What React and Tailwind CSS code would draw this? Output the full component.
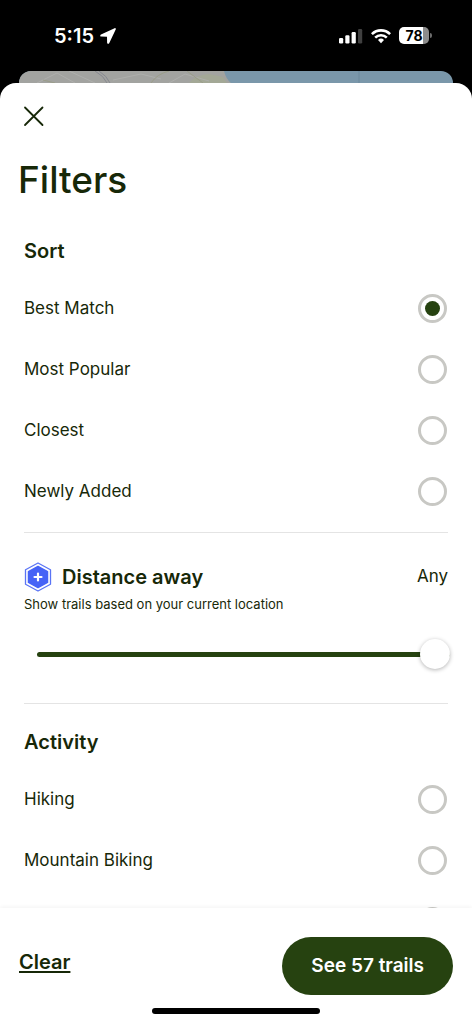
import React, { useState } from 'react';

const sortOptions = ['Best Match', 'Most Popular', 'Closest', 'Newly Added'];
const activities = ['Hiking', 'Mountain Biking', 'Running'];

const StatusBar = () => (
  <div className="flex h-[71px] shrink-0 items-center justify-between pl-[54px] pr-10 text-white">
    <div className="flex items-center gap-1.5">
      <span className="text-xl font-semibold">5:15</span>
      <svg className="size-4" viewBox="0 0 16 16" fill="currentColor" aria-hidden="true">
        <path d="M14.600.2 1 6.600C-.2 7.200.1 8.600 1.300 8.600L7 8.700 7.100 14.500C7.100 15.900 8.700 16.200 9.300 14.900L15.700 1.400C16.100.5 15.400-.2 14.600.2Z" />
      </svg>
    </div>
    <div className="flex items-center gap-2">
      <svg className="h-4 w-6" viewBox="0 0 24 16" fill="currentColor" aria-hidden="true">
        <rect x="0" y="10" width="4.200" height="5.500" rx="1.200" />
        <rect x="6.300" y="7.200" width="4.200" height="8.300" rx="1.200" />
        <rect x="12.600" y="4" width="4.200" height="11.500" rx="1.200" />
        <rect x="19" y="1" width="4.200" height="14.500" rx="1.200" opacity="0.250" />
      </svg>
      <svg className="h-4 w-5" viewBox="0 0 20 16" fill="none" stroke="currentColor" strokeWidth="2.600" aria-hidden="true">
        <path d="M.9 6.100a13 13 0 0 1 18.200 0" />
        <path d="M4.200 9.600a8.300 8.300 0 0 1 11.600 0" />
        <path d="M7 11.900a4.600 4.600 0 0 1 6 0L10 15.300Z" fill="currentColor" stroke="none" />
      </svg>
      <div className="flex items-center gap-px">
        <div className="flex h-[17px] w-[30px] items-center justify-center rounded-[5px] bg-linear-to-r from-white from-80% to-[#8c8c8c] to-80% text-sm font-bold text-black">
          78
        </div>
        <span className="h-[5px] w-0.5 rounded-r-full bg-[#6b6b6b]" />
      </div>
    </div>
  </div>
);

// Sliver of the map that stays visible behind the sheet
const MapPeek = () => (
  <div className="mx-[19px] h-3 shrink-0 overflow-hidden rounded-t-xl bg-[#7a97aa]">
    <svg className="h-3 w-[434px]" viewBox="0 0 434 12" fill="none" aria-hidden="true">
      <path d="M0 0H205Q207 8 212 12H0Z" fill="#a2a3a0" />
      <path d="M170 12Q176 4 190 3L204 6L208 12Z" fill="#a3a896" />
      <path d="M76 0Q85 5 88 12M80 0Q88 5 91 12" stroke="#868890" />
      <path d="M18 12L38 2L56 12M50 0L76 12M94 9L122 3L142 8M150 12L166 3L190 10" stroke="#aeafac" />
      <path d="M132 12Q138 3 150 0M24 9L36 12M168 0L184 12" stroke="#9a9d88" />
      <path d="M340 0V12" stroke="#6c899c" />
    </svg>
  </div>
);

const PlusBadge = () => (
  <svg className="h-[30px] w-7" viewBox="0 0 28 30" aria-hidden="true">
    <path d="M14 1 26.500 7.700V22.300L14 29 1.500 22.300V7.700Z" fill="#fff" stroke="#5a74f5" strokeWidth="1.300" strokeLinejoin="round" />
    <path d="M14 4.500 23.500 9.600V20.400L14 25.500 4.500 20.400V9.600Z" fill="#4663f6" stroke="#4663f6" strokeWidth="1.500" strokeLinejoin="round" />
    <path d="M14 11.500V18.500M10.500 15H17.500" stroke="#fff" strokeWidth="2.200" strokeLinecap="round" />
  </svg>
);

const OptionList = ({ name, options, value, onChange }) => (
  <div className="mt-[13px]">
    {options.map((option) => (
      <label key={option} className="flex h-[61px] cursor-pointer items-center justify-between pr-px text-[17px]">
        <span>{option}</span>
        <input
          type="radio"
          name={name}
          checked={value === option}
          onChange={() => onChange(option)}
          className="size-[29px] appearance-none rounded-full border-[3px] border-[#c8c8c4] bg-white bg-clip-content p-1 checked:bg-[#264210]"
        />
      </label>
    ))}
  </div>
);

export default function App() {
  const [sort, setSort] = useState('Best Match');
  const [activity, setActivity] = useState(null);
  const [distance, setDistance] = useState(100);

  const clearFilters = () => {
    setSort('Best Match');
    setActivity(null);
    setDistance(100);
  };

  return (
    <div className="flex h-screen flex-col bg-black font-['Inter',sans-serif] text-[#172808]">
      <StatusBar />
      <MapPeek />

      <main className="flex min-h-0 flex-1 flex-col overflow-hidden rounded-t-2xl bg-white">
        <div className="min-h-0 flex-1 overflow-y-auto [scrollbar-width:none]">
          <button type="button" aria-label="Close" className="ml-[22px] mt-[21px] block size-6">
            <svg viewBox="0 0 24 24" fill="none" stroke="currentColor" strokeWidth="1.800" strokeLinecap="round">
              <path d="M3 3.500 20.500 21M20.500 3.500 3 21" />
            </svg>
          </button>
          <h1 className="mt-8 px-[18px] text-[37px] leading-10 font-medium">Filters</h1>

          <section className="mx-6 mt-[37px] border-b border-[#e4e4e4] pb-2.5">
            <h2 className="text-xl leading-7 font-semibold">Sort</h2>
            <OptionList name="sort" options={sortOptions} value={sort} onChange={setSort} />
          </section>

          <section className="mx-6 border-b border-[#e4e4e4] pt-[30px] pb-[34px]">
            <div className="flex h-7 items-center justify-between">
              <div className="flex items-center gap-2.5">
                <PlusBadge />
                <h2 className="text-xl leading-7 font-semibold">Distance away</h2>
              </div>
              <span className="text-[17px]">{distance === 100 ? 'Any' : `${distance} mi`}</span>
            </div>
            <p className="mt-1 text-[13px] leading-[18px]">Show trails based on your current location</p>
            <div className="-mr-0.5 mt-[26px] pl-[13px]">
              <input
                type="range"
                aria-label="Distance away"
                min="0"
                max="100"
                value={distance}
                onChange={(e) => setDistance(Number(e.target.value))}
                className="block h-[30px] w-full appearance-none bg-transparent [&::-webkit-slider-runnable-track]:h-[5px] [&::-webkit-slider-runnable-track]:rounded-full [&::-webkit-slider-runnable-track]:bg-[#264210] [&::-webkit-slider-thumb]:-mt-[13px] [&::-webkit-slider-thumb]:size-[30px] [&::-webkit-slider-thumb]:appearance-none [&::-webkit-slider-thumb]:rounded-full [&::-webkit-slider-thumb]:bg-white [&::-webkit-slider-thumb]:shadow-[0_1px_4px_rgba(0,0,0,0.3)]"
              />
            </div>
          </section>

          <section className="mx-6 pt-6">
            <h2 className="text-xl leading-7 font-semibold">Activity</h2>
            <OptionList name="activity" options={activities} value={activity} onChange={setActivity} />
          </section>
        </div>

        <footer className="relative bg-white pt-[29px] pb-2.5 shadow-[0_-1px_4px_rgba(0,0,0,0.05)]">
          <div className="flex items-center justify-between px-[19px]">
            <button type="button" onClick={clearFilters} className="mb-2 text-xl font-semibold underline underline-offset-2">
              Clear
            </button>
            <button type="button" className="h-[58px] rounded-full bg-[#264210] px-[29px] text-[19px] font-semibold text-white">
              See 57 trails
            </button>
          </div>
          <div className="mx-auto mt-[13px] h-1.5 w-[168px] rounded-full bg-black" />
        </footer>
      </main>
    </div>
  );
}
